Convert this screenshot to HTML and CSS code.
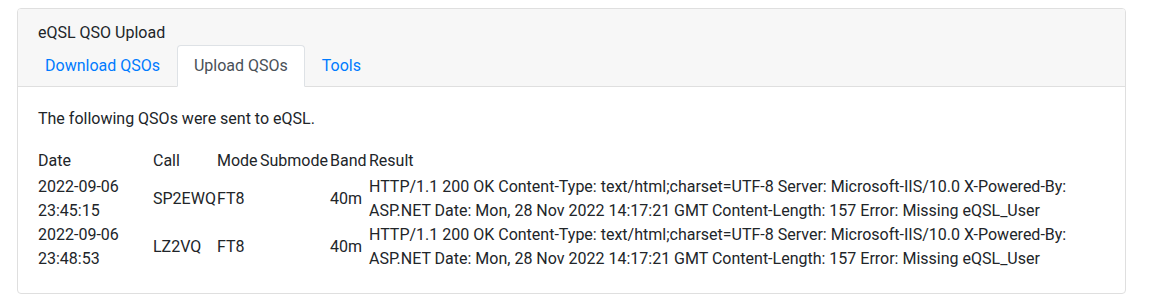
FILE: index.html
```html
<!DOCTYPE html>
<html>
<head>
<meta charset="utf-8">
<link rel="stylesheet" href="styles.css">
</head>
<body>
<div class="page">
  <div class="card">
    <div class="card-header">
      <div class="title">eQSL QSO Upload</div>
      <ul class="tabs">
        <li><a class="tab">Download QSOs</a></li>
        <li><a class="tab active">Upload QSOs</a></li>
        <li><a class="tab">Tools</a></li>
      </ul>
    </div>
    <div class="card-body">
      <p class="intro">The following QSOs were sent to eQSL.</p>
      <table class="qsos">
        <colgroup>
          <col class="c-date"><col class="c-call"><col class="c-mode"><col class="c-sub"><col class="c-band"><col>
        </colgroup>
        <thead>
          <tr><th>Date</th><th>Call</th><th>Mode</th><th>Submode</th><th>Band</th><th>Result</th></tr>
        </thead>
        <tbody>
          <tr>
            <td>2022-09-06 23:45:15</td><td>SP2EWQ</td><td>FT8</td><td></td><td>40m</td>
            <td>HTTP/1.1 200 OK Content-Type: text/html;charset=UTF-8 Server: Microsoft-IIS/10.0 X-Powered-By: ASP.NET Date: Mon, 28 Nov 2022 14:17:21 GMT Content-Length: 157 Error: Missing eQSL_User</td>
          </tr>
          <tr>
            <td>2022-09-06 23:48:53</td><td>LZ2VQ</td><td>FT8</td><td></td><td>40m</td>
            <td>HTTP/1.1 200 OK Content-Type: text/html;charset=UTF-8 Server: Microsoft-IIS/10.0 X-Powered-By: ASP.NET Date: Mon, 28 Nov 2022 14:17:21 GMT Content-Length: 157 Error: Missing eQSL_User</td>
          </tr>
        </tbody>
      </table>
    </div>
  </div>
</div>
</body>
</html>
```

FILE: styles.css
```css
* { box-sizing: border-box; }
html, body { margin: 0; padding: 0; background: #fff; }
body {
  font-family: Roboto, "Liberation Sans", sans-serif;
  font-size: 16px;
  line-height: 1.5;
  color: #212529;
}
.page { padding: 8px 24px 0 17px; }
.card {
  border: 1px solid #dfdfdf;
  border-radius: 4px;
  background: #fff;
}
.card-header {
  background: #f7f7f7;
  border-bottom: 1px solid #dfdfdf;
  border-radius: 3px 3px 0 0;
  padding: 12px 20px 0 20px;
}
.title { height: 24px; }
.tabs {
  list-style: none;
  margin: 0 0 -1px -10px;
  padding: 0;
  display: flex;
}
.tab {
  display: block;
  padding: 8px 16px;
  border: 1px solid transparent;
  border-radius: 4px 4px 0 0;
  color: #007bff;
  text-decoration: none;
}
.tab.active {
  color: #495057;
  background: #fff;
  border-color: #dee2e6 #dee2e6 #fff;
}
.card-body { padding: 20px 20px 22px 20px; }
.intro { margin: 0 0 16px 0; }
.qsos {
  width: 100%;
  border-collapse: collapse;
}
.qsos th, .qsos td {
  padding: 0;
  text-align: left;
  font-weight: normal;
  vertical-align: middle;
}
.qsos th { padding-top: 2px; padding-bottom: 2px; }
.c-date { width: 115px; }
.c-call { width: 64px; }
.c-mode { width: 43px; }
.c-sub { width: 70px; }
.c-band { width: 39px; }
```
